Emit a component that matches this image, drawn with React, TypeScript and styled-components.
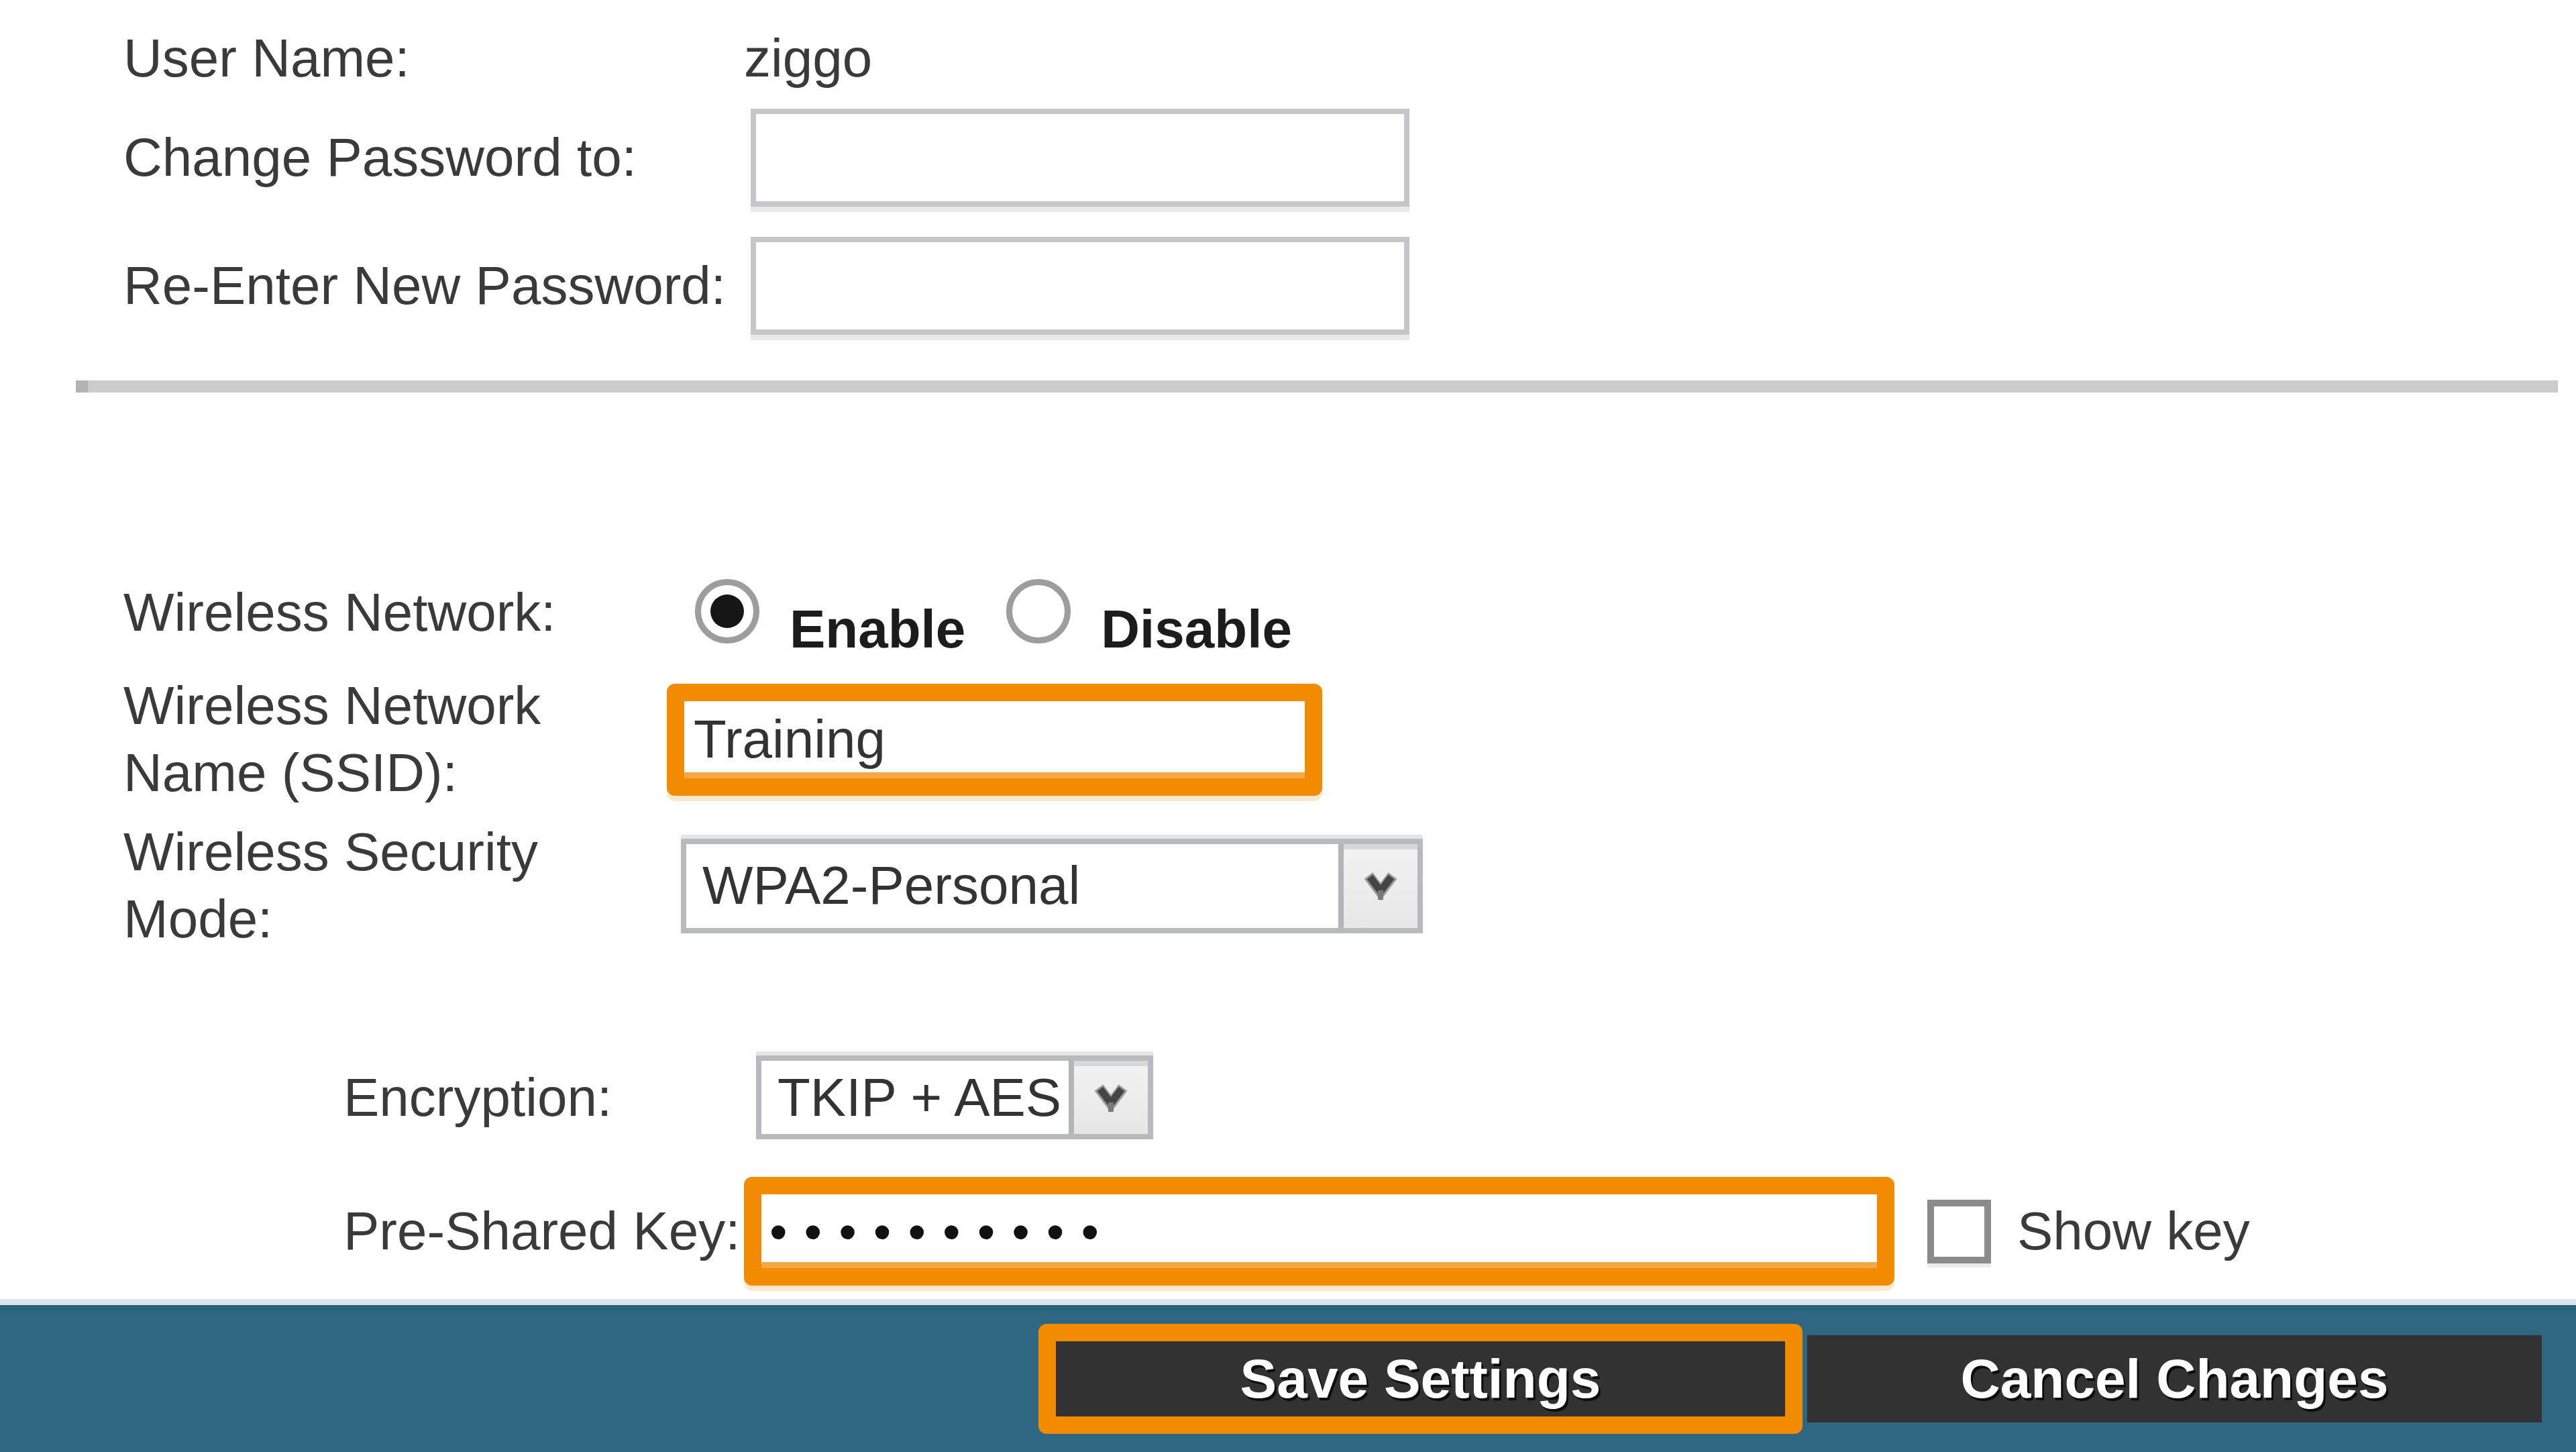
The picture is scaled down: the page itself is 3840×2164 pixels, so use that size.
import React from "react";
import styled, { createGlobalStyle, css } from "styled-components";

const GlobalStyle = createGlobalStyle`
  html, body {
    margin: 0;
    padding: 0;
    background: #ffffff;
  }
  body {
    font-family: "Liberation Sans", Arial, sans-serif;
  }
  #root {
    width: 3840px;
    height: 2164px;
    overflow: hidden;
  }
`;

const ORANGE = "#f38b00";

const Page = styled.div`
  width: 3840px;
  height: 2164px;
  display: flex;
  flex-direction: column;
  background: #ffffff;
  color: #3a3a3a;
  font-family: "Liberation Sans", Arial, sans-serif;
  font-size: 80px;
  line-height: 100px;
`;

const Content = styled.main`
  flex: 1;
  display: flex;
  flex-direction: column;
  padding-top: 37px;
`;

const Section = styled.section<{ $indent: number; $top?: number }>`
  display: flex;
  flex-direction: column;
  padding-left: ${(p) => p.$indent}px;
  margin-top: ${(p) => p.$top ?? 0}px;
`;

const Row = styled.div<{ $top?: number; $align?: "center" | "flex-start" }>`
  display: flex;
  align-items: ${(p) => p.$align ?? "center"};
  margin-top: ${(p) => p.$top ?? 0}px;
`;

const Label = styled.label<{ $width: number; $nowrap?: boolean }>`
  flex: none;
  width: ${(p) => p.$width}px;
  line-height: 100px;
  color: #3a3a3a;
  white-space: ${(p) => (p.$nowrap ? "nowrap" : "normal")};
`;

const Value = styled.span<{ $shift?: number }>`
  margin-left: ${(p) => p.$shift ?? 0}px;
  color: #3a3a3a;
`;

const TextInput = styled.input<{ $width: number; $height: number; $highlight?: boolean }>`
  box-sizing: border-box;
  width: ${(p) => p.$width}px;
  height: ${(p) => p.$height}px;
  margin: 0;
  font-family: "Liberation Sans", Arial, sans-serif;
  font-size: 80px;
  color: #333333;
  background: #ffffff;
  outline: none;
  ${(p) =>
    p.$highlight
      ? css`
          border: 26px solid ${ORANGE};
          border-radius: 12px;
          padding: 0 14px;
          box-shadow: inset 0 -9px 0 #f6a846, 0 8px 0 #fde9d0;
        `
      : css`
          border: 8px solid #c5c6c9;
          border-radius: 0;
          padding: 0 14px;
          box-shadow: 0 8px 0 #e9e9eb;
        `}
`;

const KeyInput = styled(TextInput)`
  font-size: 76px;
  letter-spacing: 25px;
  padding: 0 12px;
  color: #111111;
`;

const Divider = styled.hr`
  height: 18px;
  margin: 68px 27px 0 113px;
  border: none;
  border-left: 18px solid #b3b3b3;
  background: #cbcbcb;
  box-sizing: border-box;
`;

const RadioGroup = styled.div<{ $shift: number }>`
  display: flex;
  align-items: flex-start;
  margin-left: ${(p) => p.$shift}px;
`;

const RadioOption = styled.label<{ $gap?: number }>`
  display: flex;
  align-items: flex-start;
  margin-left: ${(p) => p.$gap ?? 0}px;
`;

const RadioCircle = styled.span<{ $checked: boolean }>`
  flex: none;
  box-sizing: border-box;
  width: 96px;
  height: 96px;
  border-radius: 50%;
  border: 9px solid #9d9d9d;
  background: #ffffff;
  display: flex;
  align-items: center;
  justify-content: center;
  &::after {
    content: "";
    width: 50px;
    height: 50px;
    border-radius: 50%;
    background: ${(p) => (p.$checked ? "#161616" : "transparent")};
  }
`;

const RadioText = styled.span`
  margin: 25px 0 0 45px;
  font-weight: bold;
  color: #1c1c1c;
`;

const Select = styled.div<{ $width: number; $height: number; $shift: number }>`
  box-sizing: border-box;
  display: flex;
  align-items: stretch;
  width: ${(p) => p.$width}px;
  height: ${(p) => p.$height}px;
  margin-left: ${(p) => p.$shift}px;
  border: 8px solid #b9babd;
  box-shadow: 0 -6px 0 #e6e6e8;
  background: #ffffff;
`;

const SelectText = styled.span`
  flex: 1;
  display: flex;
  align-items: center;
  padding-left: 24px;
  color: #333333;
  white-space: nowrap;
`;

const DropButton = styled.span`
  flex: none;
  box-sizing: border-box;
  width: 118px;
  display: flex;
  align-items: center;
  justify-content: center;
  border-left: 8px solid #b4b5b8;
  background: linear-gradient(#f3f3f3, #e6e6e6);
  box-shadow: inset 0 8px 0 #d8d8da;
`;

const Chevron = () => (
  <svg width="52" height="50" viewBox="0 0 52 50" aria-hidden="true">
    <path d="M8 10 L26 34 L44 10" fill="none" stroke="#9a9a9a" strokeWidth="16" strokeLinejoin="miter" />
    <path d="M10 12 L26 33 L42 12" fill="none" stroke="#454545" strokeWidth="11" strokeLinejoin="miter" />
    <path d="M26 32 V46" stroke="#7a7a7a" strokeWidth="8" />
  </svg>
);

const CheckBox = styled.span`
  flex: none;
  box-sizing: border-box;
  width: 95px;
  height: 95px;
  margin-left: 49px;
  border: 10px solid #8b8b8b;
  background: #ffffff;
  box-shadow: 0 6px 0 #ececec;
`;

const CheckLabel = styled.label`
  margin-left: 39px;
  color: #3a3a3a;
`;

const Footer = styled.footer`
  flex: none;
  box-sizing: border-box;
  height: 228px;
  display: flex;
  justify-content: flex-end;
  align-items: center;
  gap: 7px;
  padding-right: 51px;
  background: #2f6783;
  border-top: 9px solid #dce3ec;
  box-shadow: inset 0 8px 0 #285f7b;
`;

const FooterButton = styled.button<{ $highlight?: boolean }>`
  box-sizing: border-box;
  display: flex;
  align-items: center;
  justify-content: center;
  margin: 0;
  padding: 0;
  font-family: "Liberation Sans", Arial, sans-serif;
  font-weight: bold;
  font-size: 82px;
  color: #ffffff;
  text-shadow: 3px 4px 0 #0d0d0d;
  background: #323232;
  cursor: pointer;
  ${(p) =>
    p.$highlight
      ? css`
          width: 1139px;
          height: 164px;
          border: 26px solid ${ORANGE};
          border-radius: 12px;
        `
      : css`
          width: 1095px;
          height: 130px;
          border: none;
          border-radius: 0;
        `}
`;

export default function App() {
  return (
    <Page>
      <GlobalStyle />
      <Content>
        <Section $indent={184}>
          <Row>
            <Label $width={935} $nowrap>User Name:</Label>
            <Value $shift={-10}>ziggo</Value>
          </Row>
          <Row $top={25}>
            <Label $width={935} $nowrap>Change Password to:</Label>
            <TextInput type="password" $width={982} $height={146} readOnly />
          </Row>
          <Row $top={45}>
            <Label $width={935} $nowrap>Re-Enter New Password:</Label>
            <TextInput type="password" $width={982} $height={146} readOnly />
          </Row>
        </Section>

        <Divider />

        <Section $indent={184} $top={278}>
          <Row $align="flex-start">
            <Label $width={810}>Wireless Network:</Label>
            <RadioGroup $shift={42}>
              <RadioOption>
                <RadioCircle $checked />
                <RadioText>Enable</RadioText>
              </RadioOption>
              <RadioOption $gap={61}>
                <RadioCircle $checked={false} />
                <RadioText>Disable</RadioText>
              </RadioOption>
            </RadioGroup>
          </Row>
          <Row $top={14}>
            <Label $width={810}>Wireless Network Name (SSID):</Label>
            <TextInput type="text" $width={977} $height={167} $highlight defaultValue="Training" readOnly />
          </Row>
          <Row $top={18}>
            <Label $width={810}>Wireless Security Mode:</Label>
            <Select $width={1106} $height={141} $shift={21}>
              <SelectText>WPA2-Personal</SelectText>
              <DropButton>
                <Chevron />
              </DropButton>
            </Select>
          </Row>
        </Section>

        <Section $indent={512} $top={153}>
          <Row>
            <Label $width={597} $nowrap>Encryption:</Label>
            <Select $width={592} $height={125} $shift={18}>
              <SelectText>TKIP + AES</SelectText>
              <DropButton>
                <Chevron />
              </DropButton>
            </Select>
          </Row>
          <Row $top={56}>
            <Label $width={597} $nowrap>Pre-Shared Key:</Label>
            <KeyInput type="password" $width={1715} $height={162} $highlight defaultValue="1234567890" readOnly />
            <CheckBox />
            <CheckLabel>Show key</CheckLabel>
          </Row>
        </Section>
      </Content>

      <Footer>
        <FooterButton $highlight>Save Settings</FooterButton>
        <FooterButton>Cancel Changes</FooterButton>
      </Footer>
    </Page>
  );
}
